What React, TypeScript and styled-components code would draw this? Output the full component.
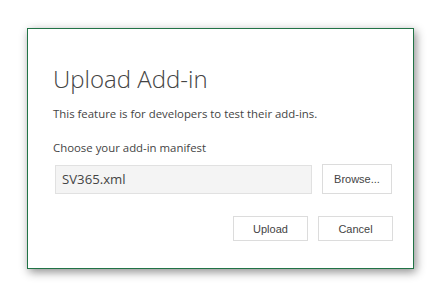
import React from "react";
import styled, { createGlobalStyle } from "styled-components";

const GlobalStyle = createGlobalStyle`
  html, body {
    margin: 0;
    padding: 0;
    background: #ffffff;
  }
  body {
    font-family: "Open Sans", "Noto Sans", sans-serif;
  }
`;

const Page = styled.main`
  width: 435px;
  height: 288px;
  padding: 28px 0 0 27px;
  box-sizing: border-box;
`;

const Dialog = styled.section`
  width: 387px;
  height: 241px;
  box-sizing: border-box;
  border: 1px solid #217346;
  background: #ffffff;
  box-shadow: 2px 3px 9px rgba(0, 0, 0, 0.45);
  padding: 35px 20px 0 25px;
  display: flex;
  flex-direction: column;
`;

const Title = styled.h1`
  margin: 0;
  font-family: "Open Sans", "Noto Sans", sans-serif;
  font-weight: 300;
  font-size: 24px;
  line-height: 30px;
  color: #444444;
`;

const Text = styled.p<{ $top: number }>`
  margin: ${(p) => p.$top}px 0 0;
  font-size: 11.4px;
  line-height: 16px;
  color: #444444;
`;

const Row = styled.div<{ $top: number; $gap: number; $end?: boolean }>`
  display: flex;
  align-items: center;
  gap: ${(p) => p.$gap}px;
  margin-top: ${(p) => p.$top}px;
  justify-content: ${(p) => (p.$end ? "flex-end" : "flex-start")};
`;

const FileField = styled.input`
  width: 257px;
  height: 29px;
  box-sizing: border-box;
  margin: 0 0 0 2px;
  padding: 0 6px;
  border: 1px solid #e1e1e1;
  background: #f4f4f4;
  font-family: "Open Sans", "Noto Sans", sans-serif;
  font-size: 13.2px;
  color: #444444;
  outline: none;
`;

const Button = styled.button<{ $w: number; $h: number }>`
  width: ${(p) => p.$w}px;
  height: ${(p) => p.$h}px;
  box-sizing: border-box;
  border: 1px solid #dcdcdc;
  background: #ffffff;
  padding: 0;
  font-family: "Liberation Sans", Arial, sans-serif;
  font-size: 11px;
  color: #444444;
  cursor: pointer;
`;

export default function App() {
  return (
    <>
      <GlobalStyle />
      <Page>
        <Dialog>
          <Title>Upload Add-in</Title>
          <Text $top={12}>This feature is for developers to test their add-ins.</Text>
          <Text $top={18}>Choose your add-in manifest</Text>
          <Row $top={8} $gap={10}>
            <FileField readOnly value="SV365.xml" />
            <Button $w={70} $h={30}>Browse...</Button>
          </Row>
          <Row $top={22} $gap={10} $end>
            <Button $w={75} $h={25}>Upload</Button>
            <Button $w={75} $h={25}>Cancel</Button>
          </Row>
        </Dialog>
      </Page>
    </>
  );
}
